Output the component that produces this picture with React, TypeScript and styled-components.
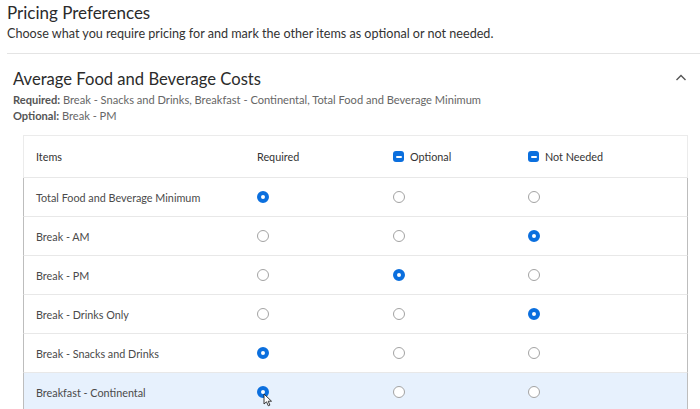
import React from "react";
import styled, { createGlobalStyle } from "styled-components";

const GlobalStyle = createGlobalStyle`
  html, body {
    margin: 0;
    padding: 0;
    background: #ffffff;
    font-family: Lato, "Noto Sans", "Liberation Sans", sans-serif;
    color: #333;
    overflow: hidden;
  }
`;

type Choice = "required" | "optional" | "notNeeded";

type Item = {
  name: string;
  choice: Choice;
  active?: boolean;
};

const items: Item[] = [
  { name: "Total Food and Beverage Minimum", choice: "required" },
  { name: "Break - AM", choice: "notNeeded" },
  { name: "Break - PM", choice: "optional" },
  { name: "Break - Drinks Only", choice: "notNeeded" },
  { name: "Break - Snacks and Drinks", choice: "required" },
  { name: "Breakfast - Continental", choice: "required", active: true },
];

const choices: Choice[] = ["required", "optional", "notNeeded"];

const Page = styled.div`
  padding: 2px 0 0 7px;
`;

const Title = styled.h1`
  margin: 0;
  font-size: 17px;
  font-weight: 400;
  line-height: 21px;
  color: #2b2b2b;
`;

const Subtitle = styled.p`
  margin: 3px 0 0;
  font-size: 12.6px;
  line-height: 16px;
  color: #333;
`;

const Divider = styled.hr`
  margin: 11px 0 0;
  border: 0;
  border-top: 1px solid #e4e4e4;
`;

const Section = styled.section`
  padding: 15px 12px 0 6px;
`;

const SectionHead = styled.div`
  display: flex;
  align-items: center;
  justify-content: space-between;
`;

const SectionTitle = styled.h2`
  margin: 0;
  font-size: 16.6px;
  font-weight: 400;
  line-height: 20px;
  color: #2b2b2b;
`;

const Chevron = styled.svg`
  width: 14px;
  height: 14px;
  margin-top: -2px;
`;

const Summary = styled.div`
  margin-top: 3px;
  font-size: 11.1px;
  line-height: 16px;
  color: #666;

  b {
    font-weight: 700;
    color: #555;
  }
`;

const Table = styled.div`
  margin: 11px 0 0 10px;
  width: 665px;
`;

const Row = styled.div<{ $head?: boolean; $active?: boolean }>`
  display: grid;
  grid-template-columns: 221px 136px 135px 1fr;
  align-items: center;
  height: ${(p) => (p.$head ? 41 : 38)}px;
  font-size: 10.8px;
  color: ${(p) => (p.$head ? "#333" : "#4a4a4a")};
  background: ${(p) => (p.$active ? "#e7f1fd" : "#fff")};
  border: 1px solid #ebebeb;
  border-left: ${(p) => (p.$head ? "1px solid #ebebeb" : "1px solid #bdbdbd")};
  border-right: ${(p) => (p.$head ? "1px solid #ebebeb" : "1px solid #bdbdbd")};
  border-top: ${(p) => (p.$head ? "1px solid #ebebeb" : "none")};
  border-bottom: 1px solid #e8e8e8;
`;

const Cell = styled.div`
  display: flex;
  align-items: center;
  gap: 6px;
  padding-left: 12px;
  position: relative;
`;

const MinusBox = styled.span`
  display: inline-flex;
  align-items: center;
  justify-content: center;
  width: 11px;
  height: 11px;
  border-radius: 3px;
  background: #0b6fde;

  &::after {
    content: "";
    width: 6px;
    height: 2px;
    background: #fff;
    border-radius: 1px;
  }
`;

const Radio = styled.span<{ $checked: boolean }>`
  box-sizing: border-box;
  display: inline-block;
  width: 12px;
  height: 12px;
  border-radius: 50%;
  border: ${(p) => (p.$checked ? "4px solid #0b6fde" : "1px solid #a3a3a3")};
  background: #fff;
`;

const Cursor = styled.svg`
  position: absolute;
  left: 18px;
  top: 7px;
  width: 10px;
  height: 14px;
`;

export default function App() {
  return (
    <Page>
      <GlobalStyle />
      <Title>Pricing Preferences</Title>
      <Subtitle>
        Choose what you require pricing for and mark the other items as optional or not needed.
      </Subtitle>
      <Divider />
      <Section>
        <SectionHead>
          <SectionTitle>Average Food and Beverage Costs</SectionTitle>
          <Chevron viewBox="0 0 14 14" fill="none" stroke="#555" strokeWidth="1.4">
            <path d="M2.5 9 L7 4.5 L11.5 9" />
          </Chevron>
        </SectionHead>
        <Summary>
          <div>
            <b>Required:</b> Break - Snacks and Drinks, Breakfast - Continental, Total Food and
            Beverage Minimum
          </div>
          <div>
            <b>Optional:</b> Break - PM
          </div>
        </Summary>
        <Table>
          <Row $head>
            <Cell>Items</Cell>
            <Cell>Required</Cell>
            <Cell>
              <MinusBox />
              Optional
            </Cell>
            <Cell>
              <MinusBox />
              Not Needed
            </Cell>
          </Row>
          {items.map((item) => (
            <Row key={item.name} $active={item.active}>
              <Cell>{item.name}</Cell>
              {choices.map((c) => (
                <Cell key={c}>
                  <Radio $checked={item.choice === c} />
                  {item.active && c === "required" && (
                    <Cursor viewBox="0 0 10 14">
                      <path
                        d="M1 1 L1 11 L3.5 8.8 L5.3 12.8 L6.9 12.1 L5.2 8.2 L8.5 8.2 Z"
                        fill="#fff"
                        stroke="#222"
                        strokeWidth="0.9"
                        strokeLinejoin="round"
                      />
                    </Cursor>
                  )}
                </Cell>
              ))}
            </Row>
          ))}
        </Table>
      </Section>
    </Page>
  );
}
